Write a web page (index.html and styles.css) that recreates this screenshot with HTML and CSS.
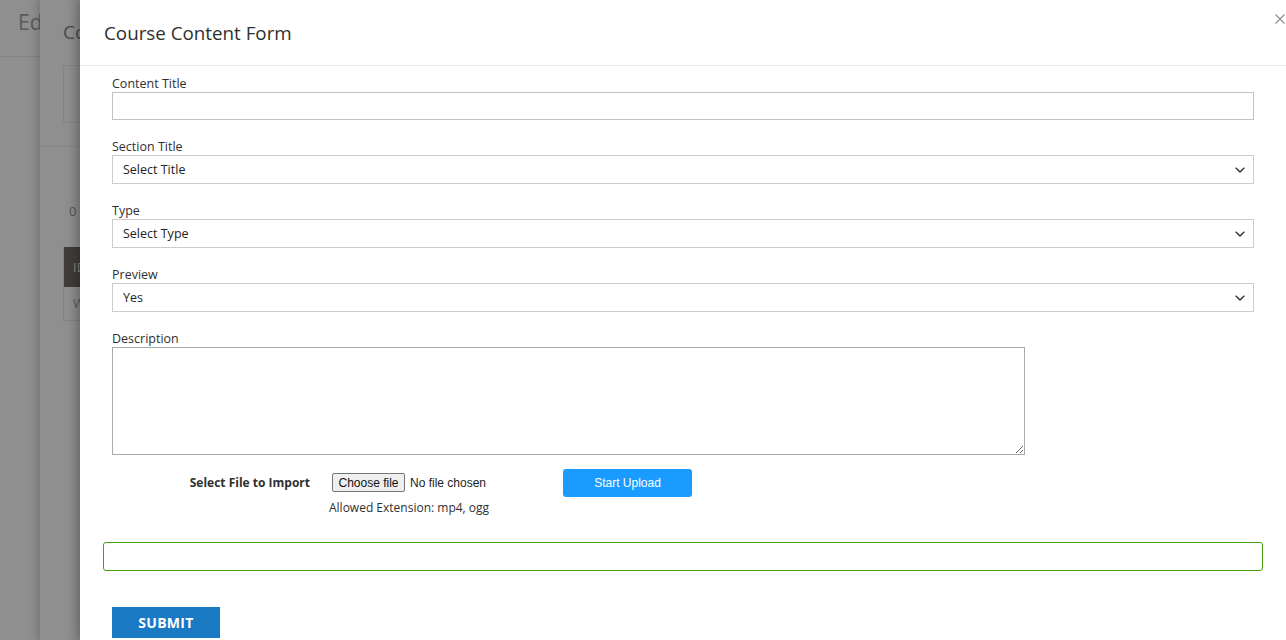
FILE: index.html
```html
<!DOCTYPE html>
<html lang="en">
<head>
    <meta charset="UTF-8">
    <meta name="viewport" content="width=device-width, initial-scale=1.0">
    <title>Course Content Form</title>
    <link rel="stylesheet" href="styles.css">
</head>
<body>

    <div class="page">
        <div class="page-title">Edit Course</div>
        <div class="page-line"></div>
    </div>

    <div class="panel-back">
        <div class="back-clip">
            <div class="back-title">Course Content</div>
            <div class="back-box"></div>
            <div class="back-line"></div>
            <div class="back-count">0 records found</div>
            <div class="back-table">
                <div class="back-head">ID</div>
                <div class="back-row">W</div>
            </div>
        </div>
    </div>

    <div class="modal">
        <div class="modal-header">
            <h1 class="modal-title">Course Content Form</h1>
            <span class="close-button">
                <svg width="10" height="10" viewBox="0 0 10 10">
                    <path d="M0.5 0.5 L9.5 9.5 M9.5 0.5 L0.5 9.5" stroke="#8c8f94" stroke-width="1.2" fill="none"/>
                </svg>
            </span>
        </div>

        <div class="modal-body">
            <div class="form-group">
                <label for="title">Content Title</label>
                <input type="text" id="title">
            </div>
            <div class="form-group">
                <label for="section">Section Title</label>
                <div class="select-wrap">
                    <select id="section">
                        <option>Select Title</option>
                    </select>
                    <svg class="chevron" width="10" height="6" viewBox="0 0 10 6">
                        <path d="M0.7 0.7 L5 5 L9.3 0.7" stroke="#333" stroke-width="1.4" fill="none"/>
                    </svg>
                </div>
            </div>
            <div class="form-group">
                <label for="type">Type</label>
                <div class="select-wrap">
                    <select id="type">
                        <option>Select Type</option>
                    </select>
                    <svg class="chevron" width="10" height="6" viewBox="0 0 10 6">
                        <path d="M0.7 0.7 L5 5 L9.3 0.7" stroke="#333" stroke-width="1.4" fill="none"/>
                    </svg>
                </div>
            </div>
            <div class="form-group">
                <label for="preview">Preview</label>
                <div class="select-wrap">
                    <select id="preview">
                        <option>Yes</option>
                        <option>No</option>
                    </select>
                    <svg class="chevron" width="10" height="6" viewBox="0 0 10 6">
                        <path d="M0.7 0.7 L5 5 L9.3 0.7" stroke="#333" stroke-width="1.4" fill="none"/>
                    </svg>
                </div>
            </div>
            <div class="form-group last">
                <label for="description">Description</label>
                <textarea id="description"></textarea>
            </div>

            <div class="import-row">
                <div class="import-label">Select File to Import</div>
                <div class="import-file">
                    <div class="file-line">
                        <label class="file-button" for="file">Choose file</label>
                        <span class="file-name">No file chosen</span>
                        <input type="file" id="file" class="file-input">
                    </div>
                    <div class="allowed">Allowed Extension: mp4, ogg</div>
                </div>
                <button class="upload-button">Start Upload</button>
            </div>

            <div class="progress-box"></div>

            <button class="submit-button">Submit</button>
        </div>
    </div>

</body>
</html>
```

FILE: styles.css
```css
html, body {
    margin: 0;
    height: 640px;
    overflow: hidden;
}
body {
    font-family: "Open Sans", sans-serif;
    background-color: #8f8f8f;
    position: relative;
}

/* dimmed page behind the modals */
.page {
    width: 40px;
    overflow: hidden;
}
.page-title {
    font-size: 21px;
    color: #5a5a5a;
    white-space: nowrap;
    padding: 8px 0 0 18px;
    height: 48px;
}
.page-line {
    border-top: 1px solid #828282;
}

.panel-back {
    position: absolute;
    left: 40px;
    top: 0;
    right: 0;
    bottom: 0;
    background-color: #8f8f8f;
    box-shadow: 0 0 10px 1px rgba(0, 0, 0, 0.25);
}
.back-clip {
    width: 40px;
    overflow: hidden;
}
.back-title {
    font-size: 19px;
    color: #4a4a4a;
    white-space: nowrap;
    height: 65px;
    line-height: 65px;
    padding-left: 23px;
}
.back-box {
    margin-left: 23px;
    width: 300px;
    height: 56px;
    border: 1px solid #858585;
}
.back-line {
    margin-top: 23px;
    border-top: 1px solid #878787;
}
.back-count {
    font-size: 13px;
    color: #555;
    padding: 55px 0 0 29px;
    line-height: 18px;
    white-space: nowrap;
}
.back-table {
    margin: 27px 0 0 23px;
    width: 300px;
    border: 1px solid #828282;
    border-top: none;
}
.back-head {
    background-color: #423d3a;
    color: #8a8582;
    font-size: 13px;
    height: 40px;
    line-height: 40px;
    padding-left: 9px;
}
.back-row {
    font-size: 13px;
    color: #5a5a5a;
    height: 33px;
    line-height: 33px;
    padding-left: 9px;
}

/* the slide modal */
.modal {
    position: absolute;
    left: 80px;
    top: 0;
    right: 0;
    bottom: 0;
    background-color: white;
    box-shadow: 0 0 12px 2px rgba(0, 0, 0, 0.35);
}
.modal-header {
    height: 65px;
    border-bottom: 1px solid #e9e9e9;
    display: flex;
    align-items: center;
    padding-left: 24px;
    position: relative;
}
.modal-title {
    font-size: 18.8px;
    font-weight: normal;
    color: #303030;
    margin: 0;
}
.close-button {
    position: absolute;
    top: 14px;
    right: 1px;
    width: 10px;
    height: 10px;
    line-height: 0;
}

.modal-body {
    padding: 8px 32px 0;
}
.form-group {
    margin-bottom: 17px;
}
.form-group.last {
    margin-bottom: 14px;
}
.form-group label {
    display: block;
    font-size: 12.5px;
    line-height: 17px;
    padding-top: 1px;
    color: #303030;
}
.form-group input {
    display: block;
    width: 100%;
    height: 28px;
    box-sizing: border-box;
    border: 1px solid #c2c2c2;
    margin: 0;
    padding: 0 10px;
    font-family: "Open Sans", sans-serif;
    font-size: 12.5px;
}
.select-wrap {
    position: relative;
}
.form-group select {
    display: block;
    width: 100%;
    height: 29px;
    box-sizing: border-box;
    border: 1px solid #cccccc;
    border-radius: 0;
    background-color: white;
    appearance: none;
    -webkit-appearance: none;
    margin: 0;
    padding: 0 30px 1px 10px;
    font-family: "Open Sans", sans-serif;
    font-size: 12.5px;
    color: #222;
}
.chevron {
    position: absolute;
    right: 9px;
    top: 12px;
    pointer-events: none;
}
.form-group textarea {
    display: block;
    width: 913px;
    height: 108px;
    box-sizing: border-box;
    border: 1px solid #a9a9a9;
    margin: 0;
    font-family: "Open Sans", sans-serif;
    font-size: 13px;
}

.import-row {
    display: flex;
    align-items: flex-start;
}
.import-label {
    width: 198px;
    text-align: right;
    font-size: 12px;
    font-weight: bold;
    color: #303030;
    line-height: 27px;
}
.import-file {
    width: 234px;
    margin-left: 19px;
}
.file-line {
    display: flex;
    align-items: center;
    margin: 4px 0 0 3px;
    height: 19px;
    font-family: "Liberation Sans", Arial, sans-serif;
    font-size: 12px;
    color: #222;
}
.file-button {
    height: 19px;
    width: 73px;
    box-sizing: border-box;
    background-color: #efefef;
    border: 1px solid #767676;
    border-radius: 2px;
    text-align: center;
    line-height: 18px;
    color: #111;
}
.file-name {
    margin-left: 5px;
}
.file-input {
    display: none;
}
.allowed {
    font-size: 12px;
    line-height: 18px;
    color: #303030;
    margin-top: 7px;
}
.upload-button {
    width: 129px;
    height: 28px;
    background-color: #1a9bff;
    color: white;
    border: none;
    border-radius: 3px;
    font-family: "Liberation Sans", Arial, sans-serif;
    font-size: 12px;
    cursor: pointer;
}

.progress-box {
    margin: 25px -9px 0;
    height: 27px;
    border: 1px solid #41a112;
    border-radius: 3px;
}

.submit-button {
    margin-top: 36px;
    width: 108px;
    height: 31px;
    background-color: #1979c3;
    color: white;
    border: none;
    font-family: "Open Sans", sans-serif;
    font-size: 14px;
    font-weight: bold;
    text-transform: uppercase;
    letter-spacing: 0.3px;
    cursor: pointer;
}
```
